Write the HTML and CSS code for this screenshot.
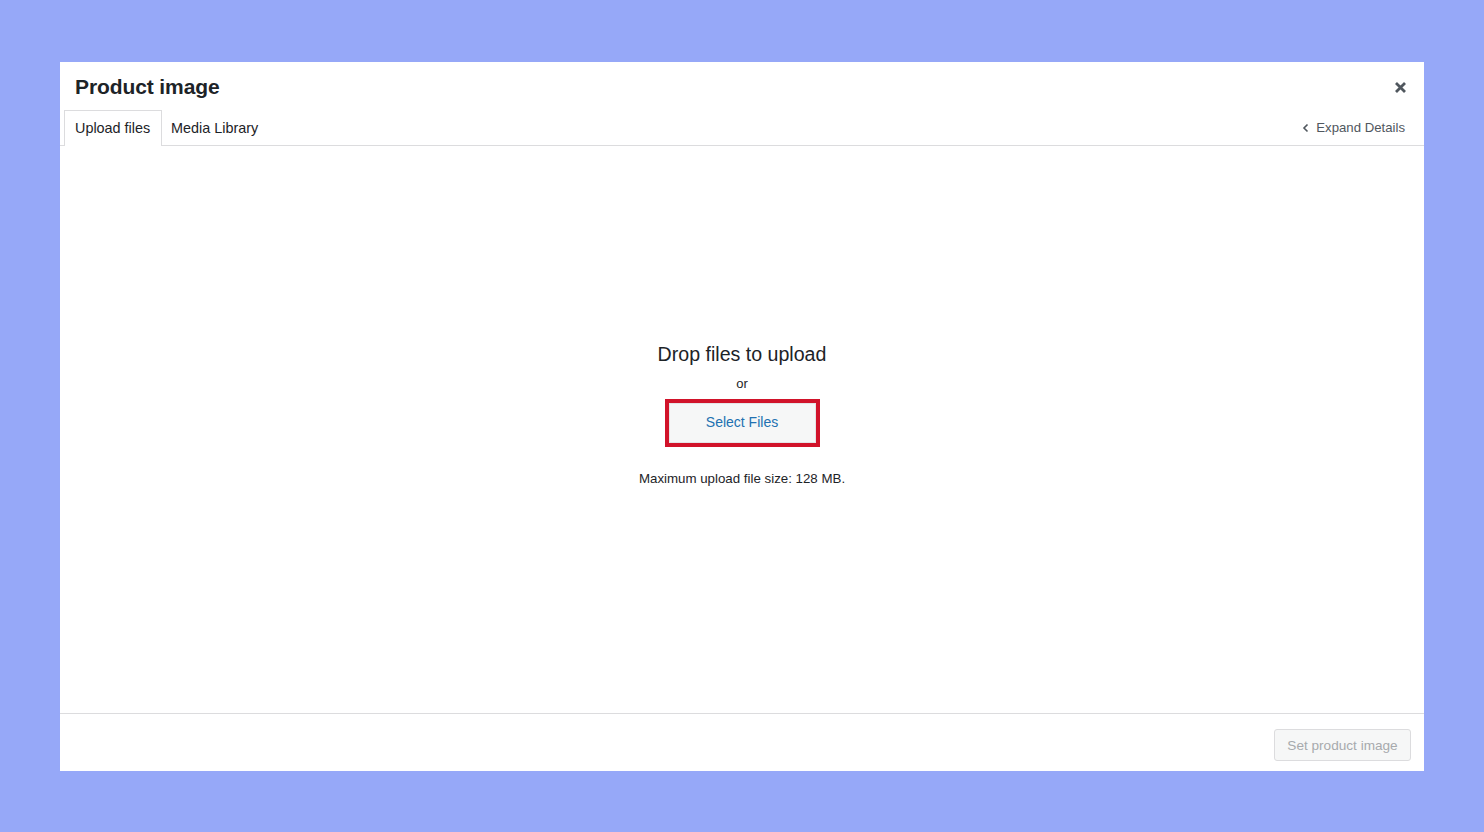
FILE: index.html
```html
<!DOCTYPE html>
<html lang="en">
<head>
<meta charset="utf-8">
<title>Product image</title>
<link rel="stylesheet" href="styles.css">
</head>
<body>
<div class="modal">
  <div class="title-row">
    <h1 class="title">Product image</h1>
    <button class="close" aria-label="Close">
      <svg width="13" height="13" viewBox="0 0 13 13"><path d="M2 2 L11 11 M11 2 L2 11" stroke="#50575e" stroke-width="2.8" stroke-linecap="butt"/></svg>
    </button>
  </div>
  <div class="tabs-row">
    <div class="tabs">
      <div class="tab active">Upload files</div>
      <div class="tab">Media Library</div>
    </div>
    <div class="expand">
      <svg width="8" height="10" viewBox="0 0 8 10"><path d="M5.5 1.5 L2 5 L5.5 8.5" fill="none" stroke="#50575e" stroke-width="1.6"/></svg>
      <span>Expand Details</span>
    </div>
  </div>
  <div class="content">
    <div class="drop">Drop files to upload</div>
    <div class="or">or</div>
    <div class="highlight">
      <button class="select">Select Files</button>
    </div>
    <div class="max">Maximum upload file size: 128 MB.</div>
  </div>
  <div class="footer">
    <button class="set">Set product image</button>
  </div>
</div>
</body>
</html>
```

FILE: styles.css
```css
html, body {
  margin: 0;
  padding: 0;
}
body {
  background: #96a8f8;
  font-family: "Liberation Sans", Arial, sans-serif;
  color: #1d2327;
  width: 1484px;
  height: 832px;
  overflow: hidden;
}
.modal {
  margin: 62px 60px 0 60px;
  height: 709px;
  background: #fff;
  display: flex;
  flex-direction: column;
}
.title-row {
  height: 48px;
  display: flex;
  align-items: center;
  justify-content: space-between;
  padding: 2px 16px 0 15px;
  box-sizing: border-box;
}
.title {
  margin: 0;
  font-size: 21px;
  font-weight: 700;
  line-height: 44px;
  color: #1d2327;
  letter-spacing: -0.1px;
}
.close {
  border: 0;
  background: none;
  padding: 0;
  width: 16px;
  height: 16px;
  display: flex;
  align-items: center;
  justify-content: center;
}
.tabs-row {
  height: 35px;
  border-bottom: 1px solid #dcdcde;
  display: flex;
  align-items: flex-end;
  justify-content: space-between;
  padding: 0 19px 0 4px;
}
.tabs {
  display: flex;
  height: 35px;
}
.tab {
  height: 35px;
  line-height: 35px;
  padding: 0 10px;
  font-size: 14.4px;
  color: #1d2327;
  border: 1px solid transparent;
  border-bottom: 0;
  box-sizing: border-box;
}
.tab.active {
  border-color: #dcdcde;
  background: #fff;
  height: 36px;
  margin-bottom: -1px;
  padding: 0 10px;
  width: 98px;
}
.tab + .tab {
  padding-left: 8px;
}
.expand {
  height: 35px;
  display: flex;
  align-items: center;
  gap: 6px;
  font-size: 13.2px;
  color: #50575e;
}
.content {
  flex: 1;
  display: flex;
  flex-direction: column;
  align-items: center;
  padding-top: 194px;
  box-sizing: border-box;
}
.drop {
  font-size: 19.6px;
  line-height: 28px;
  color: #1d2327;
}
.or {
  font-size: 13px;
  line-height: 20px;
  margin-top: 6px;
  color: #1d2327;
}
.highlight {
  margin-top: 5px;
  border: 4px solid #d1132a;
  display: flex;
}
.select {
  width: 147px;
  height: 40px;
  background: #f6f7f7;
  border: 1px solid #e4e4e6;
  color: #2271b1;
  font-family: "Liberation Sans", Arial, sans-serif;
  font-size: 14px;
  padding: 0 0 2px 0;
}
.max {
  margin-top: 23px;
  font-size: 13.3px;
  line-height: 18px;
  color: #1d2327;
}
.footer {
  height: 58px;
  border-top: 1px solid #dcdcde;
  display: flex;
  justify-content: flex-end;
  align-items: flex-start;
  padding: 15px 13px 0 0;
  box-sizing: border-box;
}
.set {
  width: 137px;
  height: 32px;
  background: #f6f7f7;
  border: 1px solid #dcdcde;
  border-radius: 3px;
  color: #a7aaad;
  font-family: "Liberation Sans", Arial, sans-serif;
  font-size: 13.6px;
  padding: 0;
}
```
